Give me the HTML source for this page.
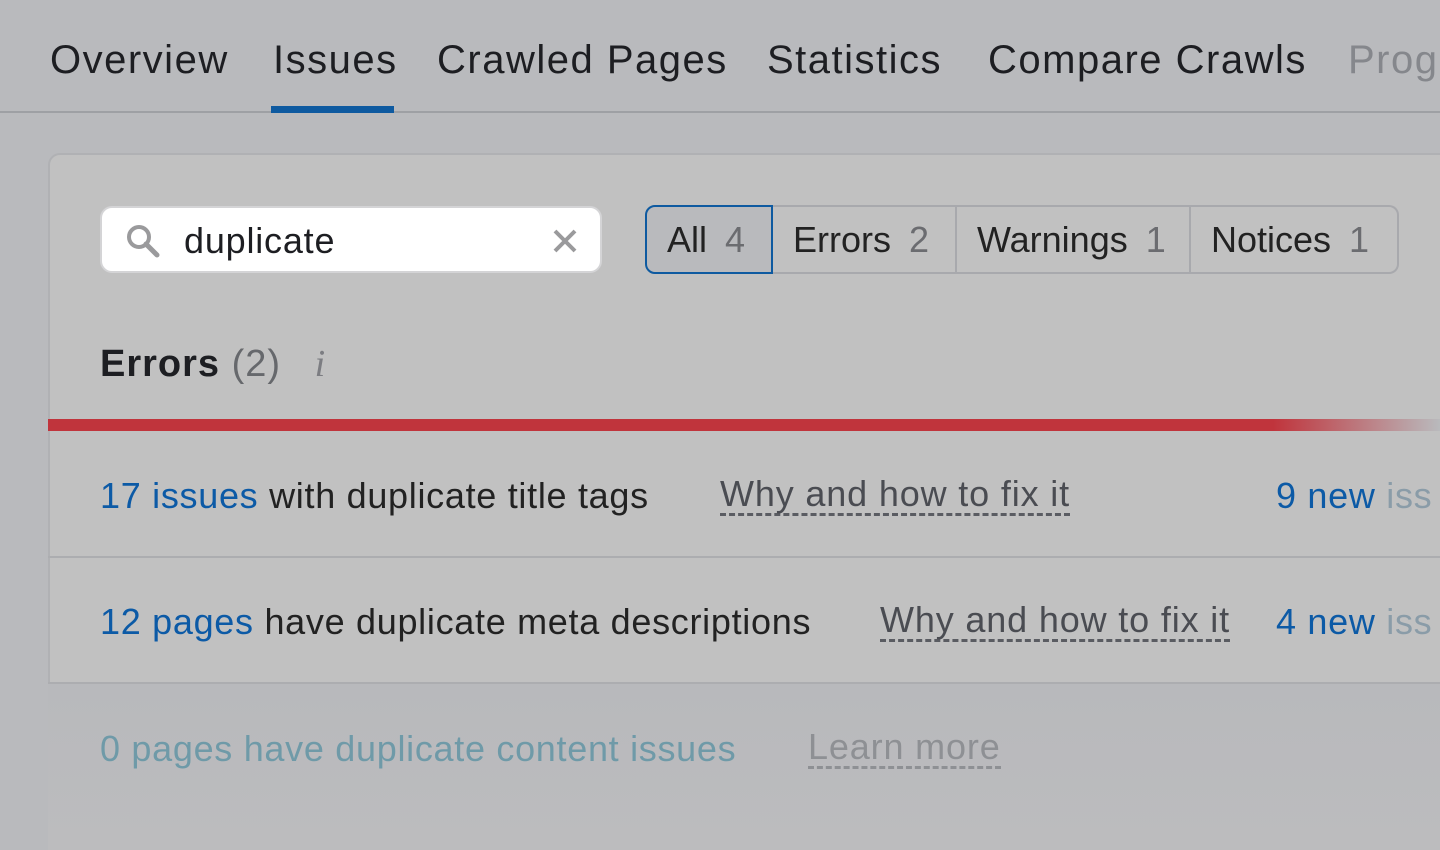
<!DOCTYPE html>
<html style="overflow:hidden;height:850px"><head><style>
body{margin:0;width:1440px;height:850px;overflow:hidden;background:#b9babd;font-family:"Liberation Sans",sans-serif;position:relative}
.t{position:absolute;top:38px;font-size:40px;color:#1d1e22;white-space:nowrap;letter-spacing:1.5px}
.line{position:absolute;left:0;top:111px;width:1440px;height:2px;background:#9ea0a4}
.ul{position:absolute;left:271px;top:106px;width:123px;height:7px;background:#0e5aa0}
.card{position:absolute;left:48px;top:153px;width:1420px;height:680px;background:#c1c1c1;border:2px solid #b0b1b4;border-radius:12px}
.search{position:absolute;left:100px;top:206px;width:502px;height:67px;background:#fff;border-radius:12px;border:2px solid #d4d4d6;box-sizing:border-box}
.seg{position:absolute;top:205px;height:69px;box-sizing:border-box;border:2px solid #a8a9ad;font-size:36px;color:#222;line-height:65px;padding-left:20px}
.seg span{color:#6b6c70;margin-left:18px}
.row{position:absolute;left:48px;width:1392px;font-size:36px;white-space:nowrap;letter-spacing:0.7px}
.b{color:#0c5aa6}.d{color:#222}
.w{color:#4a4c52;border-bottom:3px dashed #5a5c62;line-height:38px;position:absolute;letter-spacing:0.85px}
.sep{position:absolute;left:48px;width:1392px;height:2px;background:#acadb0}
</style></head><body>
<div class="t" style="left:50px">Overview</div>
<div class="t" style="left:273px">Issues</div>
<div class="t" style="left:437px">Crawled Pages</div>
<div class="t" style="left:767px">Statistics</div>
<div class="t" style="left:988px">Compare Crawls</div>
<div class="t" style="left:1348px;color:#85878c">Prog</div>
<div class="line"></div><div class="ul"></div>
<div class="card"></div>
<div class="search">
<svg style="position:absolute;left:22px;top:14px" width="38" height="38" viewBox="0 0 38 38"><circle cx="15" cy="15" r="10" fill="none" stroke="#9a9a9c" stroke-width="4"/><path d="M22 22L33 33" stroke="#9a9a9c" stroke-width="5" stroke-linecap="round"/></svg>
<div style="position:absolute;left:82px;top:12px;font-size:36px;color:#1d1e22;letter-spacing:0.8px">duplicate</div>
<svg style="position:absolute;left:450px;top:20px" width="26" height="26"><path d="M3 3L23 23M23 3L3 23" stroke="#9a9a9c" stroke-width="4"/></svg>
</div>
<div class="seg" style="left:645px;width:128px;border-color:#0e5aa0;border-radius:10px 0 0 10px;background:#b9babd">All<span>4</span></div>
<div class="seg" style="left:773px;width:184px;border-left:none">Errors<span>2</span></div>
<div class="seg" style="left:957px;width:234px;border-left:none">Warnings<span>1</span></div>
<div class="seg" style="left:1191px;width:208px;border-left:none;border-radius:0 10px 10px 0">Notices<span>1</span></div>
<div style="position:absolute;left:100px;top:342px;font-size:38px;color:#1d1e22;letter-spacing:1px"><b>Errors</b> <span style="color:#66686c">(2)</span> <i style="color:#7c7d82;font-family:'Liberation Serif';margin-left:22px">i</i></div>
<div style="position:absolute;left:48px;top:419px;width:1392px;height:12px;background:linear-gradient(90deg,#c0343c 0,#c0343c 88%,#b9babd 100%)"></div>
<div class="row" style="top:475px"><span style="position:absolute;left:52px"><span class="b">17 issues</span> <span class="d">with duplicate title tags</span></span><span class="w" style="left:672px">Why and how to fix it</span><span style="position:absolute;left:1228px" class="b">9 new <span style="color:#8a9ca8">iss</span></span></div>
<div class="sep" style="top:556px"></div>
<div class="row" style="top:601px"><span style="position:absolute;left:52px"><span class="b">12 pages</span> <span class="d">have duplicate meta descriptions</span></span><span class="w" style="left:832px">Why and how to fix it</span><span style="position:absolute;left:1228px" class="b">4 new <span style="color:#8a9ca8">iss</span></span></div>
<div class="sep" style="top:682px"></div>
<div style="position:absolute;left:48px;top:684px;width:1392px;height:166px;background:linear-gradient(#b8b9bc,#bcbcbe)"></div>
<div class="row" style="top:728px;color:#6f9aa8"><span style="position:absolute;left:52px">0 pages have duplicate content issues</span><span class="w" style="left:760px;color:#8e9094;border-bottom-color:#8e9094">Learn more</span></div>
</body></html>
